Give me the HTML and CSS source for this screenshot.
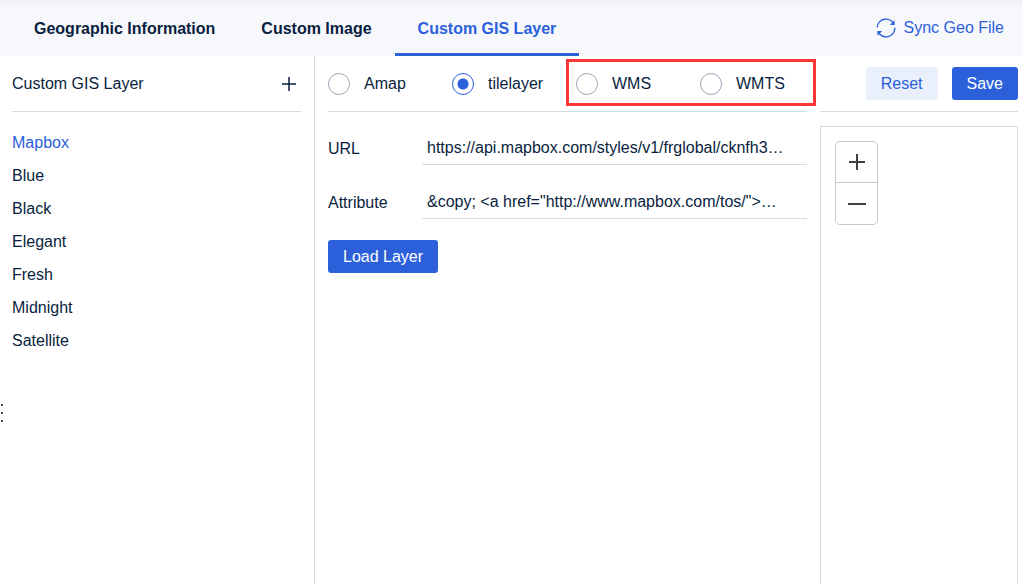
FILE: index.html
```
<!DOCTYPE html>
<html lang="en">
<head>
  <meta charset="UTF-8">
  <meta name="viewport" content="width=device-width, initial-scale=1.0">
  <title>Custom GIS Layer</title>
  <link rel="stylesheet" href="styles.css">
</head>
<body>
  <!-- Tabs -->
  <header class="topbar">
    <nav class="tabs">
      <a href="#geo" class="tab">Geographic Information</a>
      <a href="#image" class="tab">Custom Image</a>
      <a href="#layer" class="tab active">Custom GIS Layer</a>
    </nav>
    <button type="button" class="sync">
      <svg width="20" height="20" viewBox="0 0 20 20" fill="none" stroke="currentColor" stroke-width="1.4">
        <path d="M1.2 9.4A8.7 8.7 0 0 1 17.8 6.2"/>
        <path d="M18.8 9.8A8.7 8.7 0 0 1 2.2 13.8"/>
        <path d="M18.6 2.2v4.8h-4.8z M1.4 17.8v-4.8h4.8z" fill="currentColor" stroke="none"/>
      </svg>
      Sync Geo File
    </button>
  </header>

  <div class="content">
    <!-- Layer list -->
    <aside class="sidebar">
      <div class="bar">
        <h2>Custom GIS Layer</h2>
        <button type="button" class="add" aria-label="Add layer">
          <svg width="14" height="14" viewBox="0 0 14 14" stroke="currentColor" stroke-width="1.5">
            <path d="M7 0v14M0 7h14"/>
          </svg>
        </button>
      </div>
      <ul class="layers">
        <li><a href="#mapbox" class="selected">Mapbox</a></li>
        <li><a href="#blue">Blue</a></li>
        <li><a href="#black">Black</a></li>
        <li><a href="#elegant">Elegant</a></li>
        <li><a href="#fresh">Fresh</a></li>
        <li><a href="#midnight">Midnight</a></li>
        <li><a href="#satellite">Satellite</a></li>
      </ul>
      <div class="handle"><i></i><i></i><i></i></div>
    </aside>

    <!-- Layer settings -->
    <main class="settings">
      <div class="bar types">
        <label><input type="radio" name="type">Amap</label>
        <label><input type="radio" name="type" checked>tilelayer</label>
        <div class="marked">
          <label><input type="radio" name="type">WMS</label>
          <label><input type="radio" name="type">WMTS</label>
        </div>
      </div>
      <form class="form">
        <div class="field">
          <label for="url">URL</label>
          <input type="text" id="url" value="https://api.mapbox.com/styles/v1/frglobal/cknfh3…">
        </div>
        <div class="field">
          <label for="attribute">Attribute</label>
          <input type="text" id="attribute" value="&amp;copy; &lt;a href=&quot;http://www.mapbox.com/tos/&quot;&gt;…">
        </div>
        <button type="button" class="btn primary">Load Layer</button>
      </form>
    </main>

    <!-- Map preview -->
    <section class="preview">
      <div class="bar actions">
        <button type="button" class="btn light">Reset</button>
        <button type="button" class="btn primary">Save</button>
      </div>
      <div class="map">
        <div class="zoom">
          <button type="button" aria-label="Zoom in">
            <svg width="18" height="18" viewBox="0 0 18 18" stroke="currentColor" stroke-width="2">
              <path d="M9 1v16M1 9h16"/>
            </svg>
          </button>
          <button type="button" aria-label="Zoom out">
            <svg width="18" height="18" viewBox="0 0 18 18" stroke="currentColor" stroke-width="2">
              <path d="M0 9h18"/>
            </svg>
          </button>
        </div>
      </div>
    </section>
  </div>
</body>
</html>
```
FILE: styles.css
```
* {
  box-sizing: border-box;
}

body {
  margin: 0;
  min-height: 100vh;
  display: flex;
  flex-direction: column;
  font-family: Arial, "Liberation Sans", sans-serif;
  font-size: 16px;
  line-height: 20px;
  color: #091e40;
  background: #fff;
}

button,
input {
  font: inherit;
  color: inherit;
}

button {
  cursor: pointer;
}

a {
  color: inherit;
  text-decoration: none;
}

/* Tabs */
.topbar {
  display: flex;
  justify-content: space-between;
  height: 56px;
  padding: 0 18px 0 11px;
  background: linear-gradient(#f0f1f5, #f7f8fc 8px);
}

.tabs {
  display: flex;
}

.tab {
  padding: 19px 23px 14px;
  border-bottom: 3px solid transparent;
  font-weight: bold;
  white-space: nowrap;
}

.tab.active {
  color: #2c60db;
  border-bottom-color: #2c60db;
}

.sync {
  display: flex;
  align-items: center;
  gap: 8px;
  padding: 0;
  border: none;
  background: none;
  color: #2c60db;
  white-space: nowrap;
}

/* Columns */
.content {
  flex: 1;
  display: grid;
  grid-template-columns: 315px minmax(0, 1fr) 202px;
}

.bar {
  display: flex;
  align-items: center;
  height: 56px;
  border-bottom: 1px solid #d8dae2;
}

/* Layer list */
.sidebar {
  position: relative;
  padding: 0 13px 0 12px;
  border-right: 1px solid #d8dae2;
}

.sidebar .bar {
  justify-content: space-between;
}

.sidebar h2 {
  margin: 0;
  font-size: 16px;
  font-weight: normal;
}

.add {
  display: flex;
  padding: 5px;
  border: none;
  background: none;
}

.layers {
  margin: 0;
  padding: 14px 0 0;
  list-style: none;
}

.layers a {
  display: block;
  line-height: 33px;
}

.layers .selected {
  color: #2c60db;
}

.handle {
  position: absolute;
  left: 1px;
  top: 348px;
  display: flex;
  flex-direction: column;
  gap: 6px;
}

.handle i {
  width: 2px;
  height: 2px;
  background: #3d4d66;
}

/* Layer settings */
.settings {
  padding: 0 13px;
}

.types label {
  display: flex;
  flex-shrink: 0;
  align-items: center;
  gap: 14px;
  width: 124px;
}

.types label:last-child {
  width: auto;
}

.types input {
  appearance: none;
  width: 22px;
  height: 22px;
  margin: 0;
  border: 1px solid #9ea6b8;
  border-radius: 50%;
}

.types input:checked {
  border-color: #2c60db;
  background: radial-gradient(circle, #2c60db 5px, transparent 6px);
}

.marked {
  position: relative;
  display: flex;
}

/* Red frame over the new layer types */
.marked::before {
  content: "";
  position: absolute;
  inset: -14px -31px -11px -10px;
  border: 3px solid #fb3538;
  pointer-events: none;
}

.form {
  padding-top: 20px;
}

.field {
  display: flex;
  align-items: center;
  height: 33px;
  margin-bottom: 21px;
}

.field label {
  width: 94px;
}

.field input {
  flex: 1;
  min-width: 0;
  height: 33px;
  padding: 0 5px;
  border: none;
  border-bottom: 1px solid #d8dae2;
  background: none;
  text-overflow: ellipsis;
}

.btn {
  height: 33px;
  padding: 0 15px;
  border: none;
  border-radius: 3px;
}

.primary {
  background: #2c60db;
  color: #fff;
}

.light {
  background: #e9effb;
  color: #2c60db;
}

/* Map preview */
.preview {
  display: flex;
  flex-direction: column;
  padding-right: 4px;
}

.actions {
  justify-content: flex-end;
  gap: 14px;
}

.map {
  flex: 1;
  margin-top: 14px;
  padding: 14px;
  border: 1px solid #d8dae2;
  border-bottom: none;
}

.zoom {
  display: inline-flex;
  flex-direction: column;
  border: 1px solid #c8c8c8;
  border-radius: 5px;
}

.zoom button {
  display: flex;
  align-items: center;
  justify-content: center;
  width: 41px;
  height: 40px;
  padding: 0;
  border: none;
  background: none;
  color: #404040;
}

.zoom button + button {
  height: 42px;
  border-top: 1px solid #c8c8c8;
}
```
